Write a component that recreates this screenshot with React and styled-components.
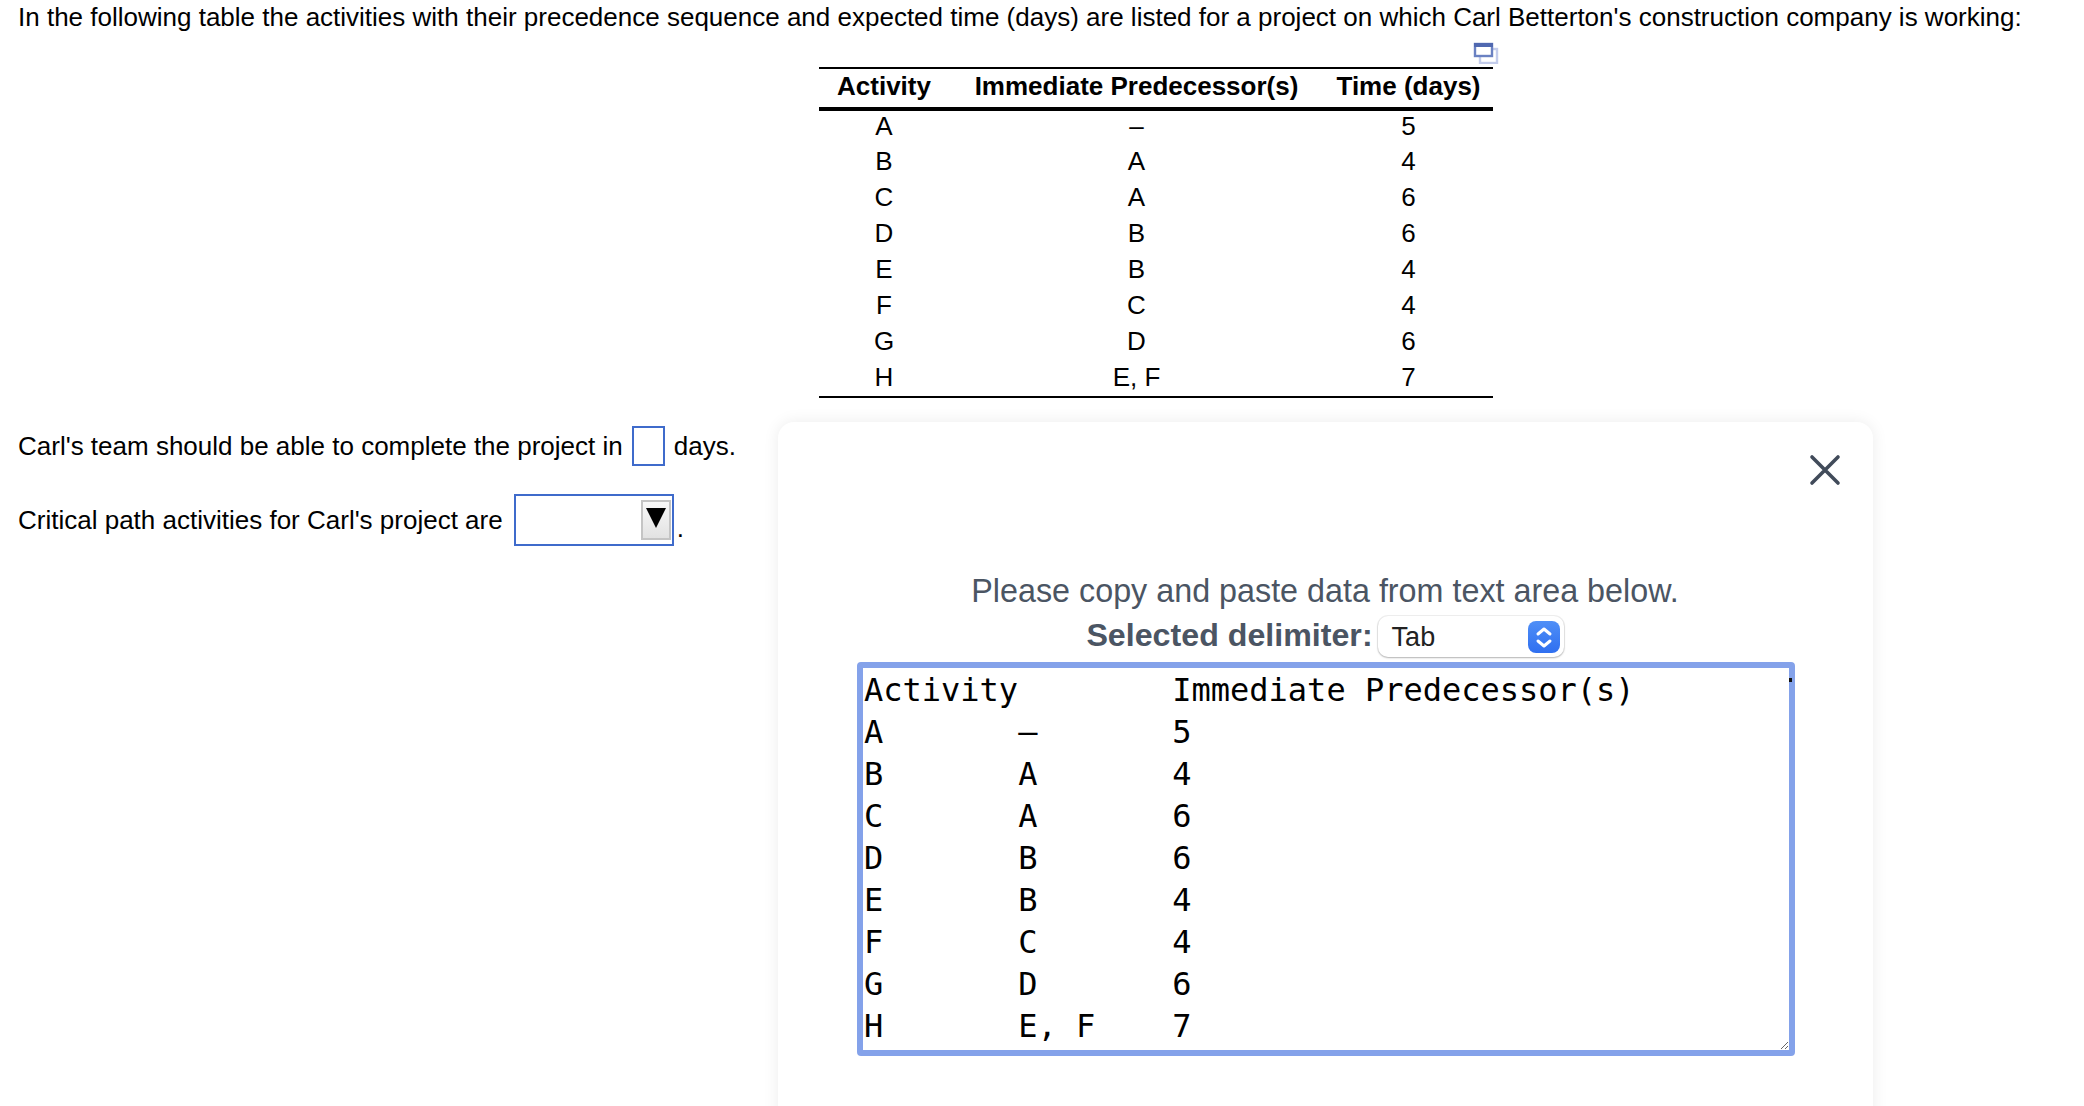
import React from "react";
import styled, { createGlobalStyle } from "styled-components";

const Global = createGlobalStyle`
  html, body { margin: 0; padding: 0; height: 1106px; overflow: hidden; background: #fff; }
  body { font-family: "Liberation Sans", Arial, sans-serif; color: #000; }
`;

const Page = styled.main`
  position: relative;
  width: 2084px;
  height: 1106px;
  overflow: hidden;
  padding: 0 18px;
  box-sizing: border-box;
  font-size: 26px;
`;

const Intro = styled.p`
  margin: 0;
  padding-top: 2px;
  line-height: 30px;
  white-space: nowrap;
`;

const TableBlock = styled.section`
  width: 674px;
  margin: 10px 0 0 801px;
  display: flex;
  flex-direction: column;
`;

const ExpandIcon = styled.svg`
  align-self: flex-end;
  width: 26px;
  height: 22px;
  margin: 0 -6px 3px 0;
`;

const DataTable = styled.table`
  width: 100%;
  border-collapse: collapse;
  border-top: 2px solid #000;
  border-bottom: 2px solid #000;
  table-layout: fixed;
`;

const HeadCell = styled.th`
  box-sizing: border-box;
  height: 41px;
  padding: 0 0 4px;
  font-weight: 700;
  text-align: center;
  border-bottom: 4px solid #000;
  width: ${(p) => p.$w}px;
`;

const Cell = styled.td`
  box-sizing: border-box;
  height: 36px;
  padding: 0 0 3px;
  text-align: center;
`;

const Sentence = styled.p`
  margin: ${(p) => p.$top}px 0 0;
  display: flex;
  align-items: center;
  white-space: nowrap;
`;

const BlankInput = styled.input`
  box-sizing: border-box;
  width: 33px;
  height: 40px;
  margin: 0 9px;
  border: 2px solid #3f6bcb;
  background: #fff;
  padding: 0;
`;

const DropBox = styled.div`
  box-sizing: border-box;
  width: 160px;
  height: 52px;
  margin: 0 3px 0 11px;
  border: 2px solid #3f6bcb;
  background: #fff;
  display: flex;
  justify-content: flex-end;
  align-items: center;
  padding: 4px 1px 4px 0;
`;

const DropButton = styled.span`
  box-sizing: border-box;
  width: 30px;
  height: 40px;
  border: 2px solid #c4c4c4;
  background: linear-gradient(#f8f8f8, #e2e2e2);
  display: flex;
  justify-content: center;
  padding-top: 6px;
`;

const Triangle = styled.svg`
  width: 20px;
  height: 20px;
`;

const Dot = styled.span`
  align-self: flex-end;
  line-height: 36px;
`;

const Dialog = styled.aside`
  position: absolute;
  left: 778px;
  top: 422px;
  width: 1095px;
  height: 760px;
  box-sizing: border-box;
  background: #fff;
  border-radius: 16px;
  box-shadow: 0 0 16px rgba(0, 0, 0, 0.08);
  padding: 147px 78px 0 79px;
  display: flex;
  flex-direction: column;
  align-items: center;
`;

const CloseButton = styled.button`
  position: absolute;
  top: 30px;
  right: 30px;
  width: 36px;
  height: 36px;
  padding: 0;
  border: 0;
  background: none;
  color: #414b5a;
  display: flex;
  align-items: center;
  justify-content: center;
`;

const Prompt = styled.div`
  margin-right: 2px;
  font-size: 32.3px;
  line-height: 44px;
  color: #4b5563;
  white-space: nowrap;
`;

const DelimiterRow = styled.div`
  display: flex;
  align-items: center;
  height: 44px;
  padding-bottom: 2px;
  margin-right: 2px;
  gap: 5px;
  font-size: 32.2px;
  line-height: 44px;
  font-weight: 700;
  color: #4b5563;
  white-space: nowrap;
`;

const DelimiterSelect = styled.div`
  box-sizing: border-box;
  width: 186px;
  height: 41px;
  margin-top: 3px;
  border-radius: 10px;
  background: #fff;
  box-shadow: 0 0 0 1px rgba(0, 0, 0, 0.06), 0 1px 2px rgba(0, 0, 0, 0.25);
  display: flex;
  align-items: center;
  justify-content: space-between;
  padding: 0 4px 0 14px;
  font-size: 27px;
  font-weight: 400;
  color: #222;
`;

const Stepper = styled.span`
  width: 32px;
  height: 32px;
  border-radius: 8px;
  background: linear-gradient(#4f8ff7, #2f6ff0);
  display: flex;
  align-items: center;
  justify-content: center;
`;

const AreaWrap = styled.div`
  position: relative;
  flex: none;
  width: 938px;
  height: 394px;
  margin-top: 3px;
`;

const DataArea = styled.textarea`
  box-sizing: border-box;
  display: block;
  width: 938px;
  height: 394px;
  margin: 0;
  padding: 1px 1px 0;
  border: 6px solid #84a2ea;
  border-radius: 4px;
  outline: none;
  background: #fff;
  color: #000;
  font-family: "DejaVu Sans Mono", "Liberation Mono", monospace;
  font-size: 32px;
  line-height: 42px;
  tab-size: 8;
  white-space: pre;
  overflow: hidden;
`;

const EdgeMark = styled.span`
  position: absolute;
  top: 16px;
  right: 3px;
  width: 3px;
  height: 4px;
  background: #111;
`;

const rows = [
  ["A", "–", "5"],
  ["B", "A", "4"],
  ["C", "A", "6"],
  ["D", "B", "6"],
  ["E", "B", "4"],
  ["F", "C", "4"],
  ["G", "D", "6"],
  ["H", "E, F", "7"],
];

const clipText =
  "Activity\tImmediate Predecessor(s)\n" +
  rows.map((r) => r.join("\t")).join("\n");

export default function App() {
  return (
    <Page>
      <Global />
      <Intro>
        In the following table the activities with their precedence sequence and expected time (days) are listed for a project on which Carl Betterton's construction company is working:
      </Intro>
      <TableBlock>
        <ExpandIcon viewBox="0 0 26 22" fill="none">
          <rect x="7" y="7" width="17" height="14" stroke="#c3cceb" strokeWidth="2.4" fill="#fff" />
          <rect x="2" y="2" width="17" height="12" stroke="#6a81c2" strokeWidth="2.4" fill="#fff" />
          <rect x="1" y="1" width="19" height="4" fill="#5068b0" />
        </ExpandIcon>
        <DataTable>
          <thead>
            <tr>
              <HeadCell $w={130}>Activity</HeadCell>
              <HeadCell $w={375}>Immediate Predecessor(s)</HeadCell>
              <HeadCell $w={169}>Time (days)</HeadCell>
            </tr>
          </thead>
          <tbody>
            {rows.map((r) => (
              <tr key={r[0]}>
                {r.map((c, i) => (
                  <Cell key={i}>{c}</Cell>
                ))}
              </tr>
            ))}
          </tbody>
        </DataTable>
      </TableBlock>
      <Sentence $top={28}>
        Carl's team should be able to complete the project in
        <BlankInput aria-label="days" />
        days.
      </Sentence>
      <Sentence $top={28}>
        Critical path activities for Carl's project are
        <DropBox>
          <DropButton>
            <Triangle viewBox="0 0 20 20">
              <path d="M0 0H20L10 20Z" fill="#000" />
            </Triangle>
          </DropButton>
        </DropBox>
        <Dot>.</Dot>
      </Sentence>
      <Dialog>
        <CloseButton aria-label="Close">
          <svg width="36" height="36" viewBox="0 0 36 36" fill="none" stroke="currentColor" strokeWidth="3.6" strokeLinecap="round">
            <path d="M5 5L31 31M31 5L5 31" />
          </svg>
        </CloseButton>
        <Prompt>Please copy and paste data from text area below.</Prompt>
        <DelimiterRow>
          Selected delimiter:
          <DelimiterSelect>
            Tab
            <Stepper>
              <svg width="32" height="32" viewBox="0 0 32 32" fill="none" stroke="#fff" strokeWidth="3" strokeLinecap="round" strokeLinejoin="round">
                <path d="M10 13L16 8L22 13M10 20L16 25L22 20" />
              </svg>
            </Stepper>
          </DelimiterSelect>
        </DelimiterRow>
        <AreaWrap>
          <DataArea readOnly spellCheck={false} defaultValue={clipText} />
          <EdgeMark />
        </AreaWrap>
      </Dialog>
    </Page>
  );
}
